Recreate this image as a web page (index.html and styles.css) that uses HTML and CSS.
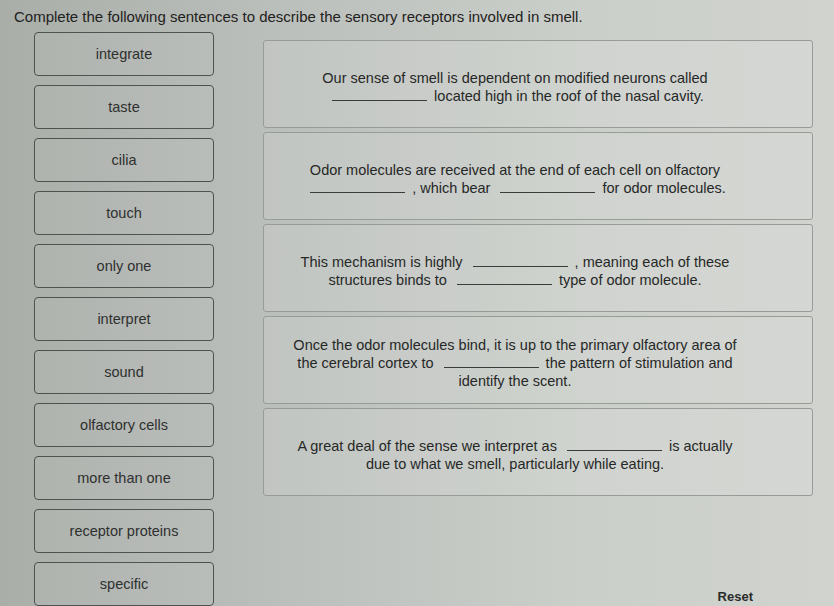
FILE: index.html
```html
<!DOCTYPE html>
<html>
<head>
<meta charset="utf-8">
<link rel="stylesheet" href="styles.css">
</head>
<body>
<h1 class="title">Complete the following sentences to describe the sensory receptors involved in smell.</h1>
<div class="main">
  <div class="tiles">
    <div class="tile">integrate</div>
    <div class="tile">taste</div>
    <div class="tile">cilia</div>
    <div class="tile">touch</div>
    <div class="tile">only one</div>
    <div class="tile">interpret</div>
    <div class="tile">sound</div>
    <div class="tile">olfactory cells</div>
    <div class="tile">more than one</div>
    <div class="tile">receptor proteins</div>
    <div class="tile">specific</div>
  </div>
  <div class="targets">
    <div class="box">
      <div class="line">Our sense of smell is dependent on modified neurons called</div>
      <div class="line"><span class="blank"></span>located high in the roof of the nasal cavity.</div>
    </div>
    <div class="box">
      <div class="line">Odor molecules are received at the end of each cell on olfactory</div>
      <div class="line"><span class="blank"></span>, which bear <span class="blank"></span>for odor molecules.</div>
    </div>
    <div class="box">
      <div class="line">This mechanism is highly <span class="blank"></span>, meaning each of these</div>
      <div class="line">structures binds to <span class="blank"></span>type of odor molecule.</div>
    </div>
    <div class="box">
      <div class="line">Once the odor molecules bind, it is up to the primary olfactory area of</div>
      <div class="line">the cerebral cortex to <span class="blank"></span>the pattern of stimulation and</div>
      <div class="line">identify the scent.</div>
    </div>
    <div class="box">
      <div class="line">A great deal of the sense we interpret as <span class="blank"></span>is actually</div>
      <div class="line">due to what we smell, particularly while eating.</div>
    </div>
    <div class="reset">Reset</div>
  </div>
</div>
</body>
</html>
```
FILE: styles.css
```css
html, body {
  margin: 0;
  padding: 0;
  height: 606px;
  overflow: hidden;
}
body {
  background: linear-gradient(to right, #a9aea9 0%, #bcc0bc 35%, #cbcfca 70%, #d0d3ce 100%);
  font-family: "Liberation Sans", Arial, sans-serif;
  color: #2a2c2b;
}
.title {
  margin: 0;
  padding: 8px 0 0 14px;
  font-size: 15px;
  font-weight: normal;
  line-height: 18px;
  color: #1f2120;
}
.main {
  display: flex;
  gap: 49px;
  padding-left: 34px;
  margin-top: 6px;
}
.tiles {
  display: flex;
  flex-direction: column;
  gap: 9px;
  width: 180px;
}
.tile {
  height: 42px;
  border: 1px solid #4e5250;
  border-radius: 4px;
  display: flex;
  align-items: center;
  justify-content: center;
  font-size: 14.5px;
  color: #2e302f;
  background: rgba(255,255,255,0.04);
}
.targets {
  width: 550px;
  display: flex;
  flex-direction: column;
  gap: 4px;
  padding-top: 8px;
}
.box {
  height: 88px;
  box-sizing: border-box;
  border: 1px solid #979c99;
  border-radius: 3px;
  background: rgba(255,255,255,0.10);
  display: flex;
  flex-direction: column;
  align-items: center;
  justify-content: center;
  padding-right: 46px;
  padding-top: 5px;
  font-size: 14.5px;
  line-height: 18px;
  color: #262827;
}
.line {
  text-align: center;
  white-space: nowrap;
}
.blank {
  display: inline-block;
  width: 95px;
  height: 12px;
  border-bottom: 1px solid #3a3c3b;
  margin: 0 7px 0 6px;
  vertical-align: baseline;
}
.reset {
  align-self: flex-end;
  margin-right: 60px;
  margin-top: 89px;
  font-size: 13px;
  line-height: 15px;
  font-weight: bold;
  color: #2a2c2b;
}
```
